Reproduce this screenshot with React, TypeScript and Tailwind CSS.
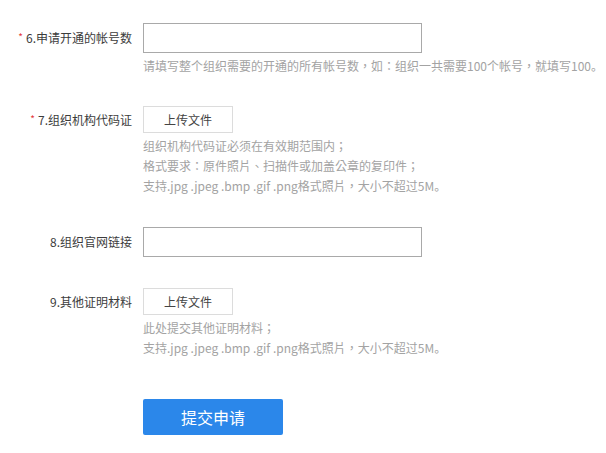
const FORMATS = '支持.jpg .jpeg .bmp .gif .png格式照片，大小不超过5M。';

type RowProps = {
  label: string;
  required?: boolean;
  children: React.ReactNode;
  hints?: string[];
};

// the full stop sits low-left as in the simplified face; other marks stay centred
function Hint({ text }: { text: string }) {
  const parts = text.split('。');
  return (
    <p>
      {parts.map((part, i) => (
        <span key={i}>
          {part}
          {i < parts.length - 1 && (
            <span className="font-['Noto_Sans_CJK_SC',sans-serif]">。</span>
          )}
        </span>
      ))}
    </p>
  );
}

function Row({ label, required, children, hints }: RowProps) {
  return (
    <div className="flex">
      <div className="w-[132px] shrink-0 flex flex-col">
        <div className="h-[var(--h)] flex items-center justify-end text-[12px] text-[#3c3c3c]">
          {required && <span className="text-[#e4393c] text-[10px] mr-[3px] -mt-[3px]">*</span>}
          {label}
        </div>
      </div>
      <div className="ml-[11px] flex flex-col">
        {children}
        {hints && (
          <div className="mt-[3px] text-[12px] leading-[20px] text-[#a3a3a3] font-['Microsoft_YaHei','Noto_Sans_CJK_TC',sans-serif]">
            {hints.map((h) => (
              <Hint key={h} text={h} />
            ))}
          </div>
        )}
      </div>
    </div>
  );
}

function TextInput() {
  return (
    <input
      type="text"
      className="w-[279px] h-[30px] border border-[#a9a9a9] bg-white px-2 text-[12px] outline-none"
    />
  );
}

function UploadButton() {
  return (
    <button
      type="button"
      className="w-[90px] h-[27px] border border-[#dcdcdc] bg-white text-[12px] text-[#444]"
    >
      上传文件
    </button>
  );
}

export default function App() {
  return (
    <div className="w-[606px] h-[453px] bg-white font-['Microsoft_YaHei','Noto_Sans_CJK_SC',sans-serif] pt-[23px]">
      <div className="[--h:30px]">
        <Row
          label="6.申请开通的帐号数"
          required
          hints={['请填写整个组织需要的开通的所有帐号数，如：组织一共需要100个帐号，就填写100。']}
        >
          <TextInput />
        </Row>
      </div>

      <div className="[--h:27px] mt-[30px]">
        <Row
          label="7.组织机构代码证"
          required
          hints={[
            '组织机构代码证必须在有效期范围内；',
            '格式要求：原件照片、扫描件或加盖公章的复印件；',
            FORMATS,
          ]}
        >
          <UploadButton />
        </Row>
      </div>

      <div className="[--h:30px] mt-[31px]">
        <Row label="8.组织官网链接">
          <TextInput />
        </Row>
      </div>

      <div className="[--h:27px] mt-[31px]">
        <Row label="9.其他证明材料" hints={['此处提交其他证明材料；', FORMATS]}>
          <UploadButton />
        </Row>
      </div>

      <div className="ml-[143px] mt-[41px]">
        <button
          type="button"
          className="w-[140px] h-[36px] bg-[#2b87ea] text-white text-[16px] rounded-[2px]"
        >
          提交申请
        </button>
      </div>
    </div>
  );
}
